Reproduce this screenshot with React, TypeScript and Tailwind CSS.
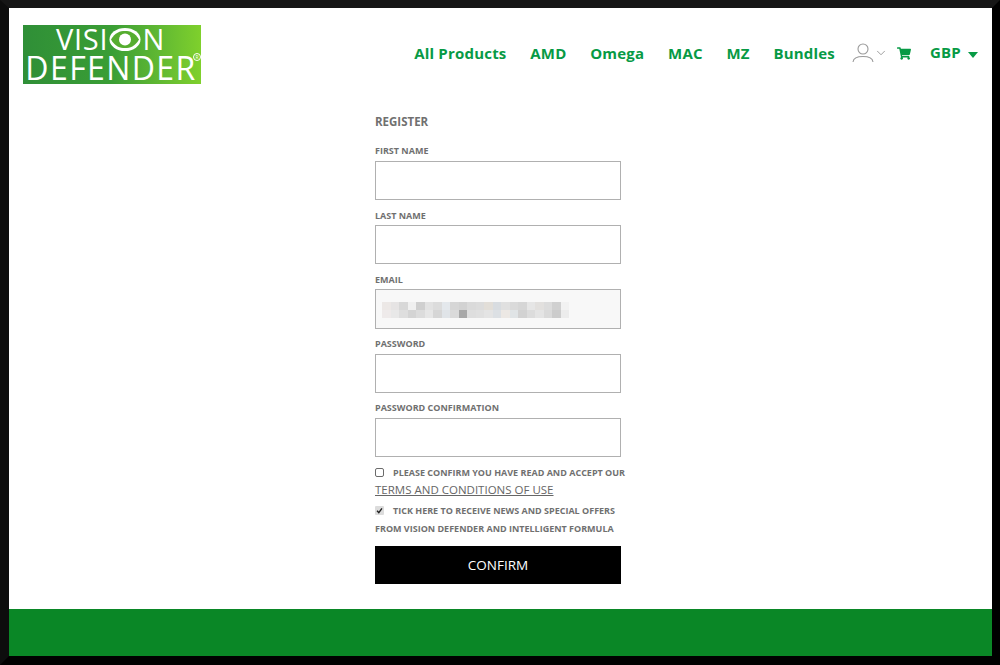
import React from 'react'
import { ChevronDown } from 'lucide-react'

const navItems = ['All Products', 'AMD', 'Omega', 'MAC', 'MZ', 'Bundles']

const blurTop = ['#ece8e6', '#e6e4e4', '#d8d8d8', '#f0f0f0', '#cfcfcf', '#e2e2e2', '#dcdcdc', '#e4e8ec', '#d6d6d6', '#d2d2d2', '#dadada', '#dcdcdc', '#e2ded8', '#d8dce0', '#e0e0e0', '#dadada', '#d6d6d6', '#e6e6e6', '#e2e0de', '#dcdcdc', '#d0d0d0', '#f2f2f2']
const blurBottom = ['#eeeaea', '#e8e8e8', '#dedede', '#d4d4d4', '#dcdcdc', '#e6e6e6', '#d6d6d6', '#e0e4e8', '#dadada', '#a8a8a8', '#dedede', '#e0e0e0', '#e4e4e4', '#dce0e4', '#ece8e4', '#e0e4e6', '#d2d2d2', '#dcdcdc', '#e4e4e4', '#dadada', '#cccccc', '#ececec']

const Field = ({ label, filled, className }: { label: string; filled?: boolean; className?: string }) => (
  <div className={className}>
    <div className="text-[9px] leading-[12px] font-bold text-[#707070] uppercase">{label}</div>
    <div className={`mt-[3.5px] relative h-[39.3px] w-[246px] border border-[#b0b0b0] ${filled ? 'bg-[#f8f8f8]' : 'bg-white'}`}>
      {filled && (
        <div className="absolute left-[6px] top-[12px] w-[187px]">
          <div className="flex h-[8px]">
            {blurTop.map((c, i) => <span key={i} className="flex-1" style={{ backgroundColor: c }} />)}
          </div>
          <div className="flex h-[8px]">
            {blurBottom.map((c, i) => <span key={i} className="flex-1" style={{ backgroundColor: c }} />)}
          </div>
        </div>
      )}
    </div>
  </div>
)

const Logo = () => (
  <div className="relative h-[59px] w-[178px] flex flex-col items-center bg-gradient-to-r from-[#2f8f37] via-[#3a9e35] to-[#7fd02c] text-white font-['Open_Sans',sans-serif] font-normal">
    <div className="flex items-center h-[28px] text-[29px] leading-[28px] tracking-[0.8px] -ml-[3px]">
      <span>VISI</span>
      <svg width="32" height="23" viewBox="0 0 32 23" className="mx-[1px]">
        <ellipse cx="16" cy="11.5" rx="15.5" ry="11.5" fill="white" />
        <path d="M2 11.5 C6 4.5 11 3 16 3 C21 3 26 4.5 30 11.5 C26 18.5 21 20 16 20 C11 20 6 18.5 2 11.5 Z" fill="#55ad2f" />
        <ellipse cx="16" cy="11.5" rx="6" ry="6" fill="white" />
      </svg>
      <span>N</span>
    </div>
    <div className="text-[32px] leading-[30px] tracking-[1.4px] whitespace-nowrap -ml-[2px]">DEFENDER</div>
    <span className="absolute right-0 top-[28px] flex h-[8px] w-[8px] items-center justify-center rounded-full border border-white text-[5px] leading-none">R</span>
  </div>
)

const App = () => {
  return (
    <div className="h-[665px] w-[1000px] flex flex-col border-t-[8px] border-t-[#161616] border-l-[9px] border-l-[#0d0d0d] border-r-[8px] border-r-black border-b-[9px] border-b-black bg-white font-['Open_Sans',sans-serif]">
      <header className="flex items-start justify-between pl-[14px] pt-[17px] h-[90px] shrink-0">
        <Logo />
        <nav className="flex items-center pt-[18px] text-[#079a45] text-[15px] font-bold tracking-[0.2px] leading-[20px]">
          <div className="flex gap-[23.75px]">
            {navItems.map((item) => (
              <a key={item} className="whitespace-nowrap">{item}</a>
            ))}
          </div>
          <svg width="22" height="20" viewBox="0 0 22 20" fill="none" stroke="#9a9a9a" strokeWidth="1.1" className="ml-[17px] -mt-[1px]">
            <circle cx="11" cy="6" r="5" />
            <path d="M1 19 C1.5 14.5 6 13.5 11 13.5 C16 13.5 20.5 14.5 21 19" />
          </svg>
          <ChevronDown size={14} className="text-[#777777]" strokeWidth={1.2} />
          <svg width="14" height="13" viewBox="0 0 576 512" fill="#079a45" className="ml-[9px] mt-[1px]">
            <path d="M528 301L575 93c3-15-8-29-23-29H159l-9-45C148 8 138 0 126 0H24C11 0 0 11 0 24v16c0 13 11 24 24 24h70l70 343c-17 10-28 28-28 49 0 31 25 56 56 56s56-25 56-56c0-16-6-30-17-40h210c-11 10-17 24-17 40 0 31 25 56 56 56s56-25 56-56c0-22-13-41-32-50l5-24c3-15-8-29-24-29H211l-7-32h301c11 0 21-8 23-19z" />
          </svg>
          <span className="ml-[19px] -mt-[2px]">GBP</span>
          <span className="ml-[7px] mt-[3px] mr-[14px] h-0 w-0 border-x-[5px] border-t-[6px] border-x-transparent border-t-[#079a45]" />
        </nav>
      </header>

      <main className="flex-1 flex flex-col ml-[366px] w-[260px] text-[#707070]">
        <h1 className="mt-[17px] text-[11.5px] leading-[14px] font-bold uppercase">Register</h1>
        <Field label="First Name" className="mt-[16.3px]" />
        <Field label="Last Name" className="mt-[9.5px]" />
        <Field label="Email" filled className="mt-[9.5px]" />
        <Field label="Password" className="mt-[9.5px]" />
        <Field label="Password Confirmation" className="mt-[9.5px]" />

        <label className="mt-[9.7px] flex items-center whitespace-nowrap text-[9px] leading-[12px] font-bold uppercase">
          <input type="checkbox" className="h-[9px] w-[9px] appearance-none rounded-[2px] border border-[#6b6b6b] bg-white" />
          <span className="ml-[9px]">Please confirm you have read and accept our</span>
        </label>
        <a className="mt-[3px] w-fit text-[11.5px] leading-[15px] text-[#666666] underline uppercase whitespace-nowrap">Terms and conditions of use</a>
        <label className="mt-[8px] flex items-center whitespace-nowrap text-[9px] leading-[12px] font-bold uppercase">
          <span className="flex h-[9px] w-[9px] items-center justify-center rounded-[1px] bg-[#dcdcdc]">
            <svg width="7" height="7" viewBox="0 0 10 10" fill="none" stroke="#222222" strokeWidth="2"><path d="M1.5 5.5 L4 8 L8.5 2" /></svg>
          </span>
          <span className="ml-[9px]">Tick here to receive news and special offers</span>
        </label>
        <p className="mt-[6px] whitespace-nowrap text-[9px] leading-[12px] font-bold uppercase">From Vision Defender and Intelligent Formula</p>
        <button className="mt-[11px] h-[38px] w-[246px] bg-black text-[13.5px] text-white uppercase">Confirm</button>
      </main>

      <footer className="h-[47px] shrink-0 bg-[#0a8726]" />
    </div>
  )
}

export default App
